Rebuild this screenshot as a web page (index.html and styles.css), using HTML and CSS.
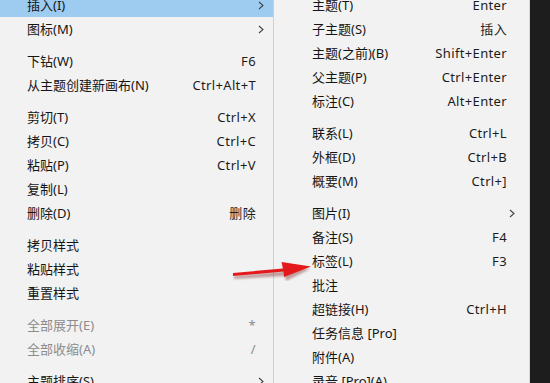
FILE: index.html
```html
<!DOCTYPE html>
<html lang="zh-CN">
<head>
<meta charset="utf-8">
<link rel="stylesheet" href="styles.css">
</head>
<body>
<div class="screen">
  <div class="menu menu-left">
    <div class="item active"><span class="label">插入(I)</span><span class="sub"><svg width="6" height="9" viewBox="0 0 6 9"><polyline points="1,1 5,4.5 1,8" fill="none" stroke="#444" stroke-width="1.1"/></svg></span></div>
    <div class="item"><span class="label">图标(M)</span><span class="sub"><svg width="6" height="9" viewBox="0 0 6 9"><polyline points="1,1 5,4.5 1,8" fill="none" stroke="#444" stroke-width="1.1"/></svg></span></div>
    <div class="sep"></div>
    <div class="item"><span class="label">下钻(W)</span><span class="key">F6</span></div>
    <div class="item"><span class="label">从主题创建新画布(N)</span><span class="key">Ctrl+Alt+T</span></div>
    <div class="sep"></div>
    <div class="item"><span class="label">剪切(T)</span><span class="key">Ctrl+X</span></div>
    <div class="item"><span class="label">拷贝(C)</span><span class="key">Ctrl+C</span></div>
    <div class="item"><span class="label">粘贴(P)</span><span class="key">Ctrl+V</span></div>
    <div class="item"><span class="label">复制(L)</span><span class="key"></span></div>
    <div class="item"><span class="label">删除(D)</span><span class="key">删除</span></div>
    <div class="sep"></div>
    <div class="item"><span class="label">拷贝样式</span></div>
    <div class="item"><span class="label">粘贴样式</span></div>
    <div class="item"><span class="label">重置样式</span></div>
    <div class="sep"></div>
    <div class="item disabled"><span class="label">全部展开(E)</span><span class="key">*</span></div>
    <div class="item disabled"><span class="label">全部收缩(A)</span><span class="key">/</span></div>
    <div class="sep"></div>
    <div class="item"><span class="label">主题排序(S)</span><span class="sub"><svg width="6" height="9" viewBox="0 0 6 9"><polyline points="1,1 5,4.5 1,8" fill="none" stroke="#444" stroke-width="1.1"/></svg></span></div>
  </div>
  <div class="menu menu-right">
    <div class="item"><span class="label">主题(T)</span><span class="key">Enter</span></div>
    <div class="item"><span class="label">子主题(S)</span><span class="key">插入</span></div>
    <div class="item"><span class="label">主题(之前)(B)</span><span class="key">Shift+Enter</span></div>
    <div class="item"><span class="label">父主题(P)</span><span class="key">Ctrl+Enter</span></div>
    <div class="item"><span class="label">标注(C)</span><span class="key">Alt+Enter</span></div>
    <div class="sep"></div>
    <div class="item"><span class="label">联系(L)</span><span class="key">Ctrl+L</span></div>
    <div class="item"><span class="label">外框(D)</span><span class="key">Ctrl+B</span></div>
    <div class="item"><span class="label">概要(M)</span><span class="key">Ctrl+]</span></div>
    <div class="sep"></div>
    <div class="item"><span class="label">图片(I)</span><span class="sub"><svg width="6" height="9" viewBox="0 0 6 9"><polyline points="1,1 5,4.5 1,8" fill="none" stroke="#444" stroke-width="1.1"/></svg></span></div>
    <div class="item"><span class="label">备注(S)</span><span class="key">F4</span></div>
    <div class="item"><span class="label">标签(L)</span><span class="key">F3</span></div>
    <div class="item"><span class="label">批注</span></div>
    <div class="item"><span class="label">超链接(H)</span><span class="key">Ctrl+H</span></div>
    <div class="item"><span class="label">任务信息 [Pro]</span></div>
    <div class="item"><span class="label">附件(A)</span></div>
    <div class="item"><span class="label">录音 [Pro](A)</span></div>
  </div>
  <div class="dark"></div>
  <svg class="arrow" width="90" height="30" viewBox="0 0 90 30">
    <defs>
      <filter id="sh" x="-20%" y="-50%" width="140%" height="200%">
        <feGaussianBlur stdDeviation="1.2"/>
      </filter>
    </defs>
    <g transform="translate(0,1)" opacity="0.35" filter="url(#sh)">
      <path d="M2,24 L52,19 L51,14 L78,17 L54,29 L53,24 L2,27 Z" fill="#600"/>
    </g>
    <path d="M1,22 L51,17.5 L49.5,11 L79,15.5 L52,26 L51.5,20.5 L1,25 Z" fill="#e3191c"/>
  </svg>
</div>
</body>
</html>
```

FILE: styles.css
```css
html, body {
  margin: 0;
  padding: 0;
}
body {
  width: 550px;
  height: 383px;
  overflow: hidden;
  background: #1d1d1d;
  font-family: "Noto Sans", "Noto Sans CJK SC", sans-serif;
  font-size: 13px;
  color: #151515;
}
.screen {
  position: relative;
  display: flex;
  width: 550px;
  height: 383px;
  overflow: hidden;
}
.menu {
  background: #f2f2f2;
  margin-top: -7px;
  display: flex;
  flex-direction: column;
  flex-shrink: 0;
}
.menu-left {
  width: 273px;
  border-right: 1px solid #cfcfcf;
}
.menu-right {
  width: 255px;
  border-right: 1px solid #d9d9d9;
}
.dark {
  flex: 1;
  background: #1d1d1d;
}
.item {
  height: 24px;
  display: flex;
  align-items: center;
  justify-content: space-between;
  line-height: 24px;
  white-space: nowrap;
}
.menu-left .item {
  padding: 0 17px 0 27px;
}
.menu-right .item {
  padding: 0 22px 0 38px;
}
.item.active {
  background: #9ecbf0;
}
.item.disabled {
  color: #8c8c8c;
}
.key {
  color: #1c1c1c;
  letter-spacing: 0.35px;
}
.item.disabled .key {
  color: #8c8c8c;
}
.sub {
  display: flex;
  align-items: center;
  margin-right: -8px;
}
.sep {
  height: 1px;
  background: #d8d8d8;
  margin: 4px 0 4px;
}
.menu-left .sep {
  margin-left: 24px;
}
.menu-right .sep {
  margin-left: 33px;
  margin-right: 1px;
}
.arrow {
  position: absolute;
  left: 232px;
  top: 251px;
}
```
